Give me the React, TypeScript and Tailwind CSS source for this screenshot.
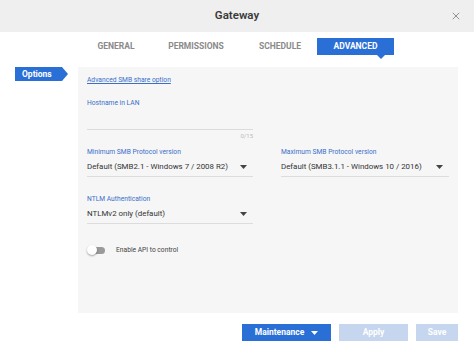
import { X } from 'lucide-react';

const tabs = ['GENERAL', 'PERMISSIONS', 'SCHEDULE', 'ADVANCED'];
const tabWidths = ['w-[66px]', 'w-[94px]', 'w-[74px]', 'w-[77px]'];

function SelectField({ label, value }: { label: string; value: string }) {
  return (
    <div className="flex flex-col">
      <div className="text-[6.7px] text-[#3b6fc9] leading-[10px] whitespace-nowrap">{label}</div>
      <div className="flex items-center justify-between h-[19px] border-b border-[#dcdcdc] pr-[6px] mt-[1px]">
        <span className="text-[7.9px] text-[#333] whitespace-nowrap">{value}</span>
        <svg className="shrink-0" width="7" height="4" viewBox="0 0 7 4"><path d="M0 0h7L3.5 4z" fill="#444" /></svg>
      </div>
    </div>
  );
}

export default function App() {
  return (
    <div className="w-[474px] h-[355px] bg-white overflow-hidden" style={{ fontFamily: 'Roboto, "Liberation Sans", Arial, sans-serif' }}>
      {/* Header */}
      <div className="relative h-[32px] bg-[#efefef] flex items-center justify-center">
        <span className="text-[11.5px] font-semibold text-[#3a3a3a]">Gateway</span>
        <X className="absolute right-[12px] top-[10px] text-[#777]" size={12} strokeWidth={1.6} />
      </div>

      {/* Tabs */}
      <div className="flex pl-[83px] mt-[6px] h-[17px]">
        {tabs.map((t, i) => {
          const active = t === 'ADVANCED';
          return (
            <div key={t} className={`relative flex items-center justify-center ${tabWidths[i]} text-[8.5px] font-bold ${active ? 'bg-[#2a6fd6] text-white' : 'text-[#8a8a8a]'}`}>
              {t}
              {active && (
                <div className="absolute -bottom-[4px] right-[9px] w-0 h-0 border-l-[4px] border-r-[4px] border-t-[4px] border-l-transparent border-r-transparent border-t-[#2a6fd6]" />
              )}
            </div>
          );
        })}
      </div>

      {/* Body */}
      <div className="flex mt-[12px] pl-[15px] pr-[16px]">
        <div className="w-[63px] shrink-0">
          <div className="relative w-[47px] h-[14px] bg-[#2a6fd6] text-white text-[8.5px] font-bold flex items-center pl-[7px]">
            Options
            <div className="absolute -right-[6px] top-0 w-0 h-0 border-t-[7px] border-b-[7px] border-l-[6px] border-t-transparent border-b-transparent border-l-[#2a6fd6]" />
          </div>
        </div>
        <div className="flex-1 h-[246px] bg-[#f6f6f6] pl-[9px] pr-[9px] pt-[8px]">
          <div className="text-[6.7px] text-[#3b6fc9] underline leading-[10px]">Advanced SMB share option</div>
          <div className="mt-[13px] text-[6.7px] text-[#3b6fc9] leading-[10px]">Hostname in LAN</div>
          <div className="w-[166px] mt-[21px] border-b border-[#dcdcdc]" />
          <div className="w-[166px] text-right text-[6px] text-[#bbb] leading-[9px] mt-[1px]">0/15</div>
          <div className="grid grid-cols-[166px_168px] gap-x-[28px] mt-[7px]">
            <SelectField label="Minimum SMB Protocol version" value="Default (SMB2.1 - Windows 7 / 2008 R2)" />
            <SelectField label="Maximum SMB Protocol version" value="Default (SMB3.1.1 - Windows 10 / 2016)" />
          </div>
          <div className="w-[166px] mt-[17px]">
            <SelectField label="NTLM Authentication" value="NTLMv2 only (default)" />
          </div>
          <div className="flex items-center mt-[21px] gap-[10px]">
            <div className="relative w-[19px] h-[10px]">
              <div className="absolute left-[3px] top-[2px] w-[15px] h-[7px] rounded-full bg-[#9a9a9a]" />
              <div className="absolute left-0 top-0 w-[10px] h-[10px] rounded-full bg-white shadow-[0_1px_2px_rgba(0,0,0,0.35)]" />
            </div>
            <span className="text-[6.7px] text-[#444]">Enable API to control</span>
          </div>
        </div>
      </div>

      {/* Footer */}
      <div className="flex justify-end gap-[8px] pr-[16px] mt-[11px]">
        <button className="w-[89px] h-[17px] bg-[#2a6fd6] text-white text-[8.5px] font-bold flex items-center justify-center gap-[7px]">
          Maintenance
          <svg width="7" height="4" viewBox="0 0 7 4"><path d="M0 0h7L3.5 4z" fill="#fff" /></svg>
        </button>
        <button className="w-[69px] h-[17px] bg-[#c6d6ee] text-white text-[8.5px] font-bold">Apply</button>
        <button className="w-[42px] h-[17px] bg-[#c6d6ee] text-white text-[8.5px] font-bold">Save</button>
      </div>
    </div>
  );
}
